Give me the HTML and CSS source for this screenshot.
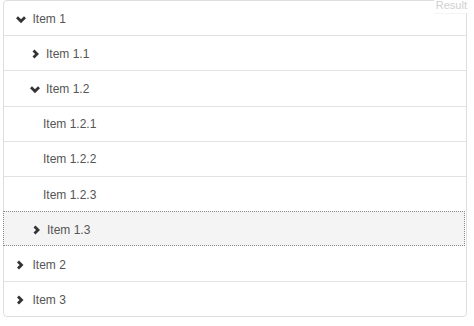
FILE: index.html
```html
<!DOCTYPE html>
<html>
<head>
<meta charset="utf-8">
<link rel="stylesheet" href="styles.css">
</head>
<body>
<div class="frame">
  <span class="result-label">Result</span>
  <ul class="tree">
    <li class="node level-0">
      <svg class="icon" viewBox="0 0 10 10"><polyline points="1,3.3 5,7.3 9,3.3"/></svg>
      <span class="text">Item 1</span>
    </li>
    <li class="node level-1">
      <svg class="icon" viewBox="0 0 10 10"><polyline points="3.5,1.6 7,5.1 3.5,8.6"/></svg>
      <span class="text">Item 1.1</span>
    </li>
    <li class="node level-1">
      <svg class="icon" viewBox="0 0 10 10"><polyline points="1,3.3 5,7.3 9,3.3"/></svg>
      <span class="text">Item 1.2</span>
    </li>
    <li class="node level-2"><span class="text">Item 1.2.1</span></li>
    <li class="node level-2"><span class="text">Item 1.2.2</span></li>
    <li class="node level-2"><span class="text">Item 1.2.3</span></li>
    <li class="node level-1 selected">
      <svg class="icon" viewBox="0 0 10 10"><polyline points="3.5,1.6 7,5.1 3.5,8.6"/></svg>
      <span class="text">Item 1.3</span>
    </li>
    <li class="node level-0 after">
      <svg class="icon" viewBox="0 0 10 10"><polyline points="2,1.6 5.5,5.1 2,8.6"/></svg>
      <span class="text">Item 2</span>
    </li>
    <li class="node level-0 after">
      <svg class="icon" viewBox="0 0 10 10"><polyline points="2,1.6 5.5,5.1 2,8.6"/></svg>
      <span class="text">Item 3</span>
    </li>
  </ul>
</div>
</body>
</html>
```

FILE: styles.css
```css
html, body {
  margin: 0;
  padding: 0;
  background: #ffffff;
}

.frame {
  position: relative;
  width: 474px;
  height: 326px;
  overflow: hidden;
  font-family: "Liberation Sans", Arial, sans-serif;
}

.result-label {
  position: absolute;
  top: 0;
  right: 5px;
  padding: 0 2px 3px;
  background: #ffffff;
  color: #cfcfcf;
  font-size: 11px;
  line-height: 10px;
  border-bottom: 1px solid #f4f4f4;
  z-index: 2;
}

.tree {
  list-style: none;
  margin: 0 0 0 3px;
  padding: 0;
  width: 464px;
  box-sizing: border-box;
  border: 1px solid #dedede;
  border-radius: 4px;
}

.node {
  display: flex;
  align-items: center;
  box-sizing: border-box;
  height: 35.2px;
  padding-top: 1px;
  border-top: 1px solid #e2e2e2;
  color: #555555;
  font-size: 12px;
  line-height: 16px;
}

.node:first-child {
  height: 34.2px;
  border-top: none;
}

.level-0 { padding-left: 12px; }
.level-1 { padding-left: 26px; }
.level-2 { padding-left: 39px; }

.icon {
  width: 10px;
  height: 10px;
  margin-right: 6px;
  flex: none;
}

.icon polyline {
  fill: none;
  stroke: #333333;
  stroke-width: 2.8;
  stroke-linecap: butt;
  stroke-linejoin: miter;
}

.level-0 .icon { margin-right: 6.5px; }

.selected {
  background: #f4f4f4;
  border: 1px dotted #8a8a8a;
  margin-left: -1px;
  margin-right: 1px;
  height: 35.2px;
  padding-top: 2.5px;
  padding-left: 27px;
}

.after {
  padding-top: 2.5px;
}

.selected + .node {
  border-top: none;
  height: 34.2px;
}
```
